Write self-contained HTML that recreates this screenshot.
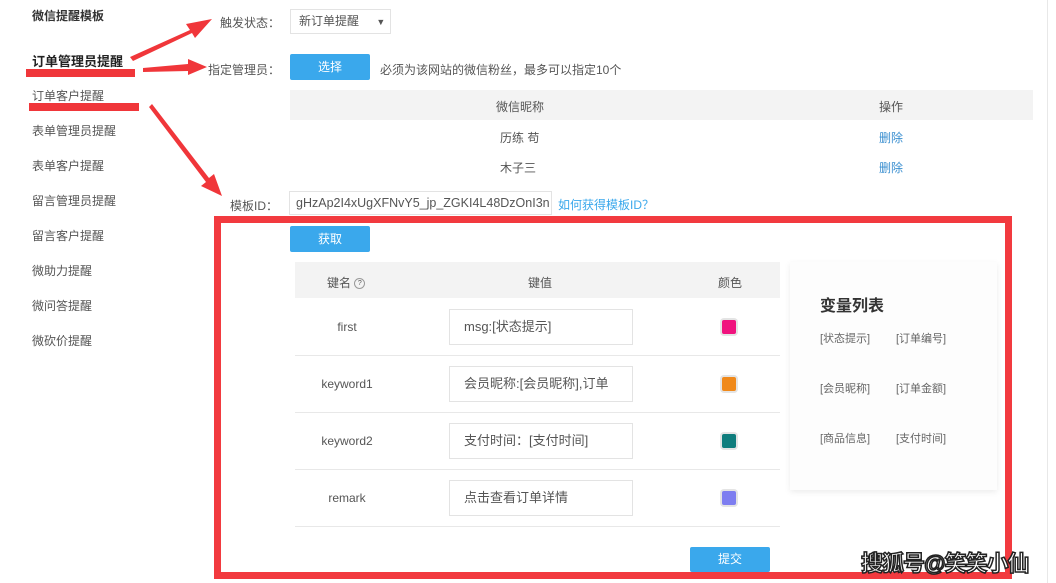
<!DOCTYPE html>
<html><head><meta charset="utf-8"><style>
body{margin:0;width:1056px;height:583px;background:#fff;position:relative;overflow:hidden;font-family:"Liberation Sans","Noto Sans CJK SC",sans-serif;color:#555;font-size:12px}
.a{position:absolute;white-space:nowrap}
.nav{left:32px;font-size:12px;color:#555}
.btn{position:absolute;background:#3aa8ec;color:#fff;text-align:center;border-radius:2px;font-size:12px}
.inp{position:absolute;border:1px solid #e3e3e3;background:#fff;box-sizing:border-box;font-size:13px;color:#555;padding-left:14px;overflow:hidden;white-space:nowrap}
.sep{position:absolute;left:295px;width:485px;height:1px;background:#e8e8e8}
.sw{position:absolute;left:722px;width:14px;height:14px;border-radius:2px;box-shadow:0 0 0 2px #e4e4e4}
.rl{position:absolute;width:100px;text-align:center;left:297px;font-size:12px;color:#555}
.v{position:absolute;font-size:11px;color:#666;white-space:nowrap}
</style></head><body>
<div class="a nav" style="top:7px;font-weight:bold;color:#333">微信提醒模板</div>
<div class="a nav" style="top:51px;font-weight:bold;color:#222;font-size:13px">订单管理员提醒</div>
<div class="a nav" style="top:87px">订单客户提醒</div>
<div class="a nav" style="top:122px">表单管理员提醒</div>
<div class="a nav" style="top:157px">表单客户提醒</div>
<div class="a nav" style="top:192px">留言管理员提醒</div>
<div class="a nav" style="top:227px">留言客户提醒</div>
<div class="a nav" style="top:262px">微助力提醒</div>
<div class="a nav" style="top:297px">微问答提醒</div>
<div class="a nav" style="top:332px">微砍价提醒</div>

<div class="a" style="left:220px;top:14px">触发状态：</div>
<div class="inp" style="left:290px;top:9px;width:101px;height:25px;line-height:23px;font-size:12px;padding-left:8px">新订单提醒 <span style="font-size:9px;margin-left:14px">▼</span></div>
<div class="a" style="left:208px;top:61px">指定管理员：</div>
<div class="btn" style="left:290px;top:54px;width:80px;height:26px;line-height:26px">选择</div>
<div class="a" style="left:380px;top:61px">必须为该网站的微信粉丝，最多可以指定10个</div>
<div class="a" style="left:290px;top:90px;width:743px;height:30px;background:#f3f3f3"></div>
<div class="a" style="left:496px;top:98px">微信昵称</div>
<div class="a" style="left:879px;top:98px">操作</div>
<div class="a" style="left:500px;top:129px">历练 苟</div>
<div class="a" style="left:879px;top:129px;color:#3a8fd0">删除</div>
<div class="a" style="left:500px;top:159px">木子三</div>
<div class="a" style="left:879px;top:159px;color:#3a8fd0">删除</div>
<div class="a" style="left:230px;top:197px">模板ID：</div>
<div class="inp" style="left:289px;top:191px;width:263px;height:24px;line-height:22px;padding-left:6px;font-size:12.5px">gHzAp2I4xUgXFNvY5_jp_ZGKI4L48DzOnI3n</div>
<div class="a" style="left:558px;top:196px;color:#3aa8ec">如何获得模板ID？</div>

<div class="a" style="left:214px;top:216px;width:784px;height:349px;border:7px solid #f23a3f"></div>
<div class="btn" style="left:290px;top:226px;width:80px;height:26px;line-height:26px">获取</div>
<div class="a" style="left:295px;top:262px;width:485px;height:36px;background:#f3f3f3"></div>
<div class="a" style="left:327px;top:274px">键名 <span style="display:inline-block;width:9px;height:9px;border:1px solid #999;border-radius:50%;font-size:7px;line-height:9px;text-align:center;vertical-align:middle">?</span></div>
<div class="a" style="left:528px;top:274px">键值</div>
<div class="a" style="left:718px;top:274px">颜色</div>
<div class="sep" style="top:355px"></div><div class="sep" style="top:412px"></div><div class="sep" style="top:469px"></div><div class="sep" style="top:526px"></div>
<div class="rl" style="top:320px">first</div>
<div class="rl" style="top:377px">keyword1</div>
<div class="rl" style="top:434px">keyword2</div>
<div class="rl" style="top:491px">remark</div>
<div class="inp" style="left:449px;top:309px;width:184px;height:36px;line-height:34px">msg:[状态提示]</div>
<div class="inp" style="left:449px;top:366px;width:184px;height:36px;line-height:34px">会员昵称:[会员昵称],订单</div>
<div class="inp" style="left:449px;top:423px;width:184px;height:36px;line-height:34px">支付时间：[支付时间]</div>
<div class="inp" style="left:449px;top:480px;width:184px;height:36px;line-height:34px">点击查看订单详情</div>
<div class="sw" style="top:320px;background:#f0137e"></div>
<div class="sw" style="top:377px;background:#f0891a"></div>
<div class="sw" style="top:434px;background:#0f7d7d"></div>
<div class="sw" style="top:491px;background:#7e7ef0"></div>
<div class="a" style="left:790px;top:262px;width:207px;height:228px;background:#fdfdfd;box-shadow:0 2px 6px rgba(0,0,0,.08)"></div>
<div class="a" style="left:820px;top:292px;font-size:16px;font-weight:bold;color:#333">变量列表</div>
<div class="v" style="left:820px;top:330px">[状态提示]</div><div class="v" style="left:896px;top:330px">[订单编号]</div>
<div class="v" style="left:820px;top:380px">[会员昵称]</div><div class="v" style="left:896px;top:380px">[订单金额]</div>
<div class="v" style="left:820px;top:430px">[商品信息]</div><div class="v" style="left:896px;top:430px">[支付时间]</div>
<div class="btn" style="left:690px;top:547px;width:80px;height:25px;line-height:25px">提交</div>
<div class="a" style="left:1047px;top:0;width:1px;height:583px;background:#e8e8e8"></div>
<div class="a" style="left:861px;top:546px;font-size:22px;font-weight:bold;color:#fff;-webkit-text-stroke:1.5px #222;letter-spacing:-1px">搜狐号@笑笑小仙</div>

<svg class="a" style="left:0;top:0" width="1056" height="583">
<g fill="#f0363a">
<rect x="26" y="69" width="109" height="8"/>
<rect x="29" y="103" width="110" height="8"/>
<polygon points="130,57 190,30 186,24 212,19 195,38 192,33 133,61"/>
<polygon points="143,68 188,64 188,59 207,67 188,75 188,71 143,72"/>
<polygon points="152,104 209,178 214,174 222,196 201,186 206,182 149,107"/>
</g></svg>
</body></html>
